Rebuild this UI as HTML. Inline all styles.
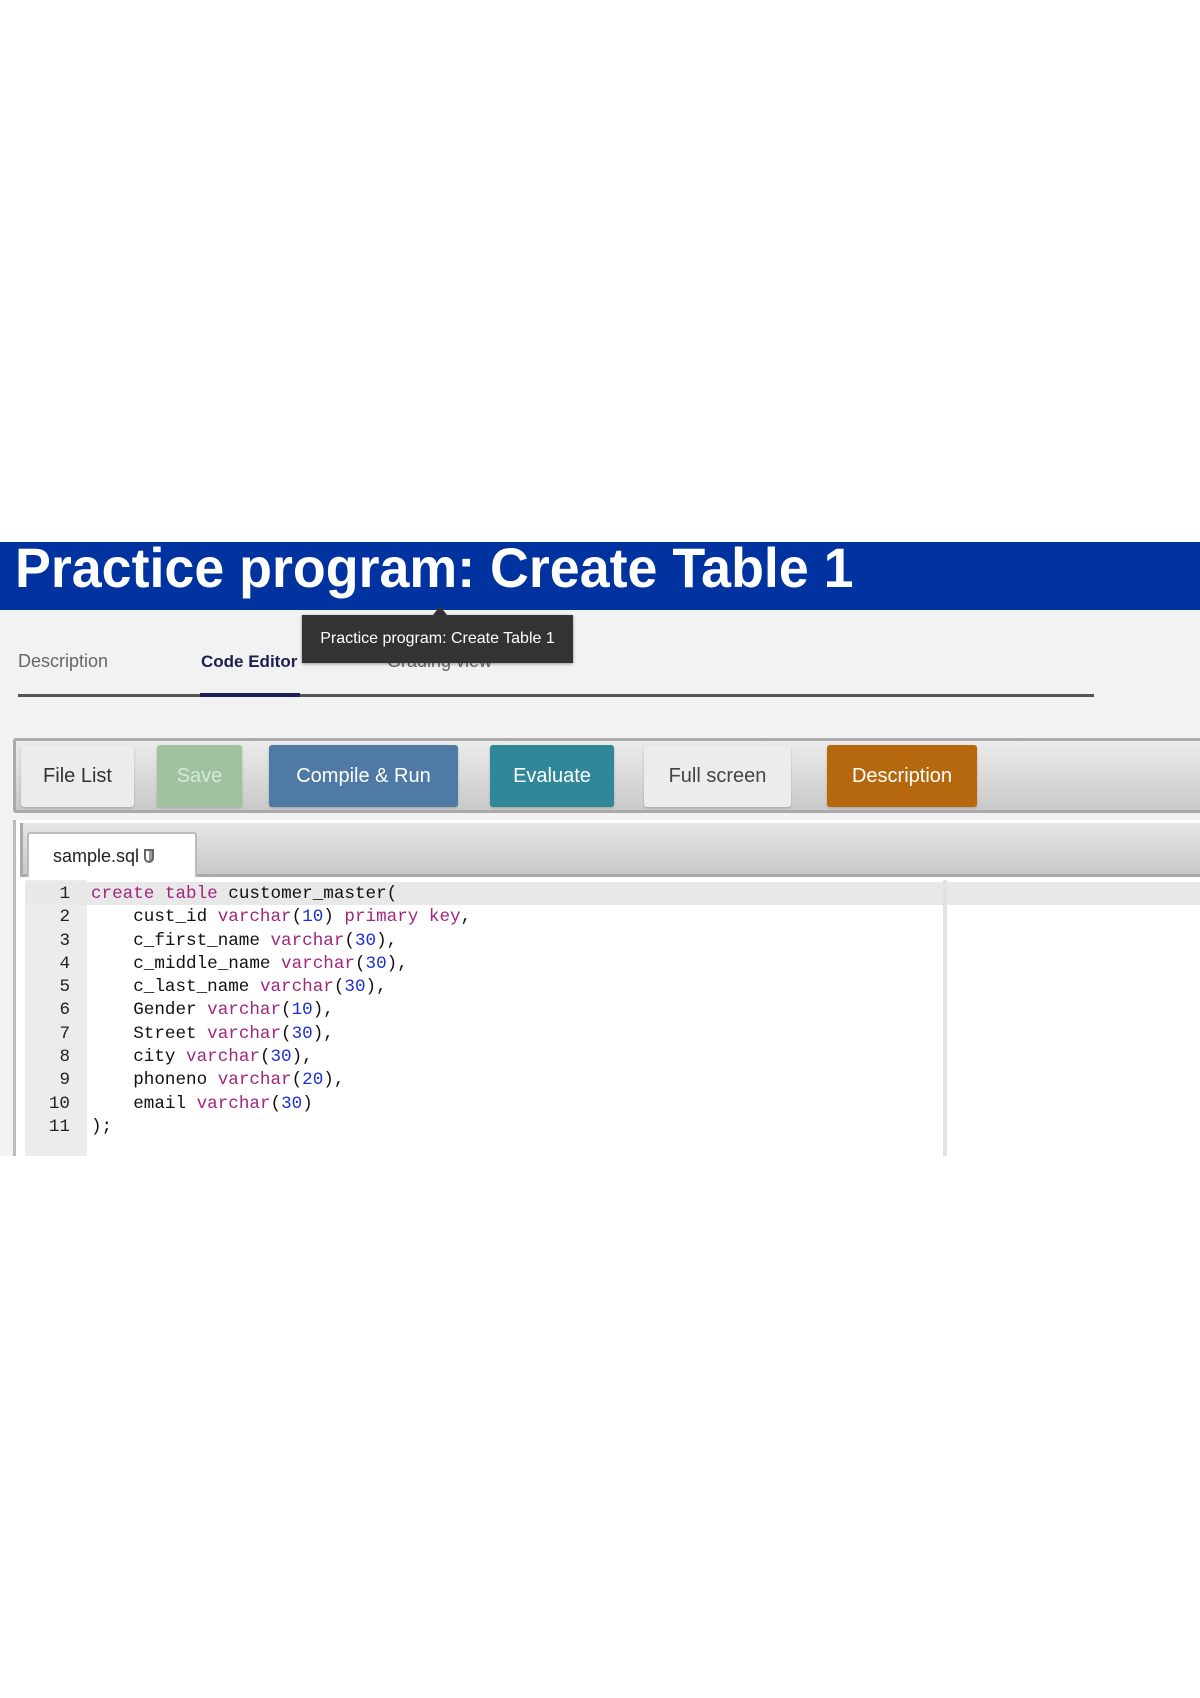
<!DOCTYPE html>
<html><head><meta charset="utf-8"><style>
*{margin:0;padding:0;box-sizing:border-box}
body{width:1200px;height:1698px;background:#fff;position:relative;overflow:hidden;font-family:"Liberation Sans",sans-serif}
.a{position:absolute}
.band{left:0;top:542px;width:1200px;height:614px;background:#f2f2f2}
.title{left:0;top:542px;width:1200px;height:68px;background:#0033a0;overflow:hidden}
.title span{position:absolute;left:15px;top:-5px;font-weight:bold;font-size:56px;color:#fff;white-space:nowrap;transform:scaleX(0.96);transform-origin:left top;line-height:62px}
.tab{font-size:18px;color:#666;top:651px}
.btn{top:745px;height:62px;border-radius:3px;font-size:20px;display:flex;align-items:center;justify-content:center;color:#fff;box-shadow:0 1px 2px rgba(0,0,0,.2)}
.code{font-family:"Liberation Mono",monospace;font-size:17.6px;line-height:23.3px;white-space:pre;color:#111}
.k{color:#a0267e}.n{color:#1a2fd0}
.ln{font-family:"Liberation Mono",monospace;font-size:17.6px;line-height:23.3px;text-align:right;color:#222;white-space:pre}
</style></head><body>
<div class="a band"></div>
<div class="a title"><span>Practice program: Create Table 1</span></div>
<div class="a tab" style="left:18px">Description</div>
<div class="a tab" style="left:201px;color:#1a1f4d;font-weight:bold;font-size:17px;top:652px">Code Editor</div>
<div class="a tab" style="left:387px">Grading view</div>
<div class="a" style="left:18px;top:694px;width:1076px;height:3px;background:#555"></div>
<div class="a" style="left:200px;top:693px;width:100px;height:4px;background:#1a1f5a"></div>
<div class="a" style="left:433px;top:606px;width:0;height:0;border-left:7px solid transparent;border-right:7px solid transparent;border-bottom:9px solid #333"></div>
<div class="a" style="left:302px;top:615px;width:271px;height:48px;background:#333;color:#fff;font-size:16px;display:flex;align-items:center;justify-content:center;box-shadow:0 1px 3px rgba(0,0,0,.4)">Practice program: Create Table 1</div>
<div class="a" style="left:13px;top:738px;width:1190px;height:75px;background:linear-gradient(#ececec,#c9c9c9);border:3px solid #aaa;border-right:none;border-radius:3px 0 0 3px"></div>
<div class="a btn" style="left:21px;width:113px;background:#ececec;color:#333">File List</div>
<div class="a btn" style="left:157px;width:85px;background:#9fc29f;color:#d8e8d8">Save</div>
<div class="a btn" style="left:269px;width:189px;background:#4f7aa6">Compile &amp; Run</div>
<div class="a btn" style="left:490px;width:124px;background:#2f8797">Evaluate</div>
<div class="a btn" style="left:644px;width:147px;background:#ececec;color:#444">Full screen</div>
<div class="a btn" style="left:827px;width:150px;background:#b6680f">Description</div>
<div class="a" style="left:13px;top:820px;width:1190px;height:336px;background:#fff;border-left:3px solid #bbb"></div>
<div class="a" style="left:20px;top:823px;width:1180px;height:54px;background:linear-gradient(#e6e6e6,#c8c8c8);border-bottom:3px solid #aaa;border-left:3px solid #aaa"></div>
<div class="a" style="left:27px;top:832px;width:170px;height:45px;background:#fff;border:2px solid #bbb;border-bottom:none;border-radius:3px 3px 0 0;font-size:18px;color:#222;padding:12px 0 0 24px">sample.sql <span style="display:inline-block;width:10px;height:14px;border:2px solid #666;border-radius:0 0 5px 5px;background:linear-gradient(90deg,#fff 50%,#999 50%);vertical-align:-1px"></span></div>
<div class="a" style="left:25px;top:880px;width:62px;height:276px;background:#ececec"></div>
<div class="a" style="left:25px;top:882px;width:1175px;height:23px;background:#e8e8e8"></div>
<div class="a" style="left:943px;top:880px;width:4px;height:276px;background:#e2e2e2"></div>
<div class="a ln" style="left:25px;top:883px;width:45px">1
2
3
4
5
6
7
8
9
10
11</div>
<div class="a code" style="left:91px;top:883px"><span class="k">create</span> <span class="k">table</span> customer_master(
    cust_id <span class="k">varchar</span>(<span class="n">10</span>) <span class="k">primary</span> <span class="k">key</span>,
    c_first_name <span class="k">varchar</span>(<span class="n">30</span>),
    c_middle_name <span class="k">varchar</span>(<span class="n">30</span>),
    c_last_name <span class="k">varchar</span>(<span class="n">30</span>),
    Gender <span class="k">varchar</span>(<span class="n">10</span>),
    Street <span class="k">varchar</span>(<span class="n">30</span>),
    city <span class="k">varchar</span>(<span class="n">30</span>),
    phoneno <span class="k">varchar</span>(<span class="n">20</span>),
    email <span class="k">varchar</span>(<span class="n">30</span>)
);</div>
</body></html>
